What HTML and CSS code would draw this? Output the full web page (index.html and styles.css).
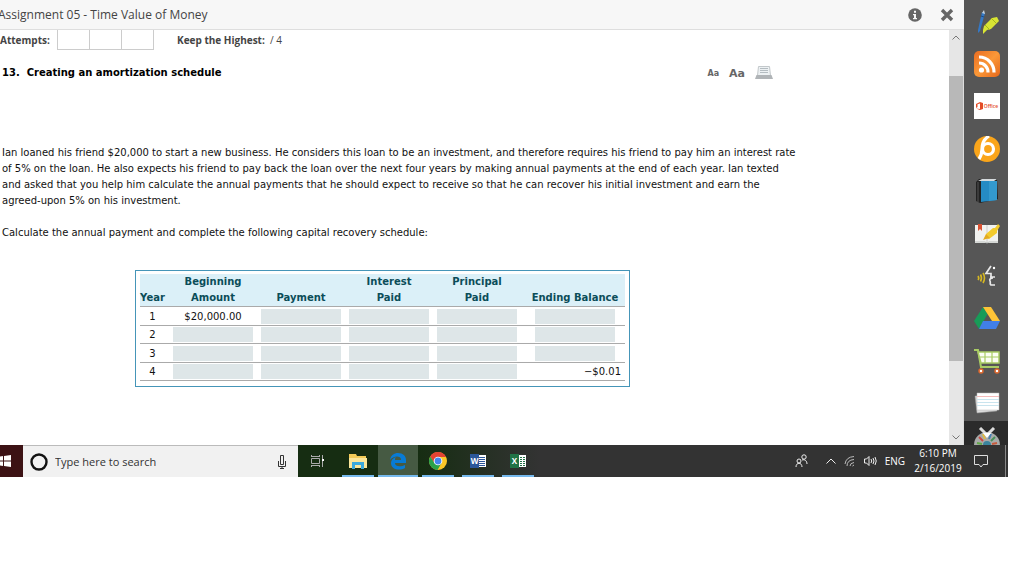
FILE: index.html
```html
<!DOCTYPE html>
<html lang="en">
<head>
  <meta charset="UTF-8">
  <meta name="viewport" content="width=device-width, initial-scale=1.0">
  <title>Assignment 05 - Time Value of Money</title>
  <link rel="stylesheet" href="styles.css">
</head>
<body>
  <div class="screen">
    <div class="workspace">
      <main class="assignment">
        <header class="title-bar">
          <h1>Assignment 05 - Time Value of Money</h1>
          <button class="icon-btn" aria-label="Information">
            <svg width="14" height="14" viewBox="0 0 14 14"><circle cx="7" cy="7" r="6.8" fill="#666"/><path d="M6 2.8h2v2H6zM5 6h3v4h1v1.2H5V10h1V7.2H5z" fill="#f7f7f7"/></svg>
          </button>
          <button class="icon-btn" aria-label="Close">
            <svg width="14" height="14" viewBox="0 0 14 14"><path d="M2 2l10 10M12 2L2 12" stroke="#666" stroke-width="3.4"/></svg>
          </button>
        </header>

        <div class="viewport">
          <div class="content">
            <div class="attempts">
              <span class="attempts-label">Attempts:</span>
              <div class="attempt-boxes"><span></span><span></span><span></span></div>
              <span><b>Keep the Highest:</b>&nbsp; / 4</span>
            </div>

            <div class="question-head">
              <h2>13.&nbsp; Creating an amortization schedule</h2>
              <div class="tools">
                <button class="font-small" aria-label="Smaller text">Aa</button>
                <button class="font-large" aria-label="Larger text">Aa</button>
                <button aria-label="Print">
                  <svg width="18" height="14" viewBox="0 0 18 14"><path d="M3.500.5h11l1 9h-13z" fill="#edf1f3" stroke="#c3c8cb"/><path d="M5 2.500h8M5 4.500h8M5 6.500h8" stroke="#b4bcc1"/><path d="M1.500 9h15l1.500 4H0z" fill="#b0b4b7"/></svg>
                </button>
              </div>
            </div>

            <p class="intro">Ian loaned his friend $20,000 to start a new business. He considers this loan to be an investment, and therefore requires his friend to pay him an interest rate<br>
            of 5% on the loan. He also expects his friend to pay back the loan over the next four years by making annual payments at the end of each year. Ian texted<br>
            and asked that you help him calculate the annual payments that he should expect to receive so that he can recover his initial investment and earn the<br>
            agreed-upon 5% on his investment.</p>
            <p>Calculate the annual payment and complete the following capital recovery schedule:</p>

            <div class="schedule">
              <table>
                <thead>
                  <tr>
                    <th class="year">Year</th>
                    <th>Beginning<br>Amount</th>
                    <th>Payment</th>
                    <th>Interest<br>Paid</th>
                    <th>Principal<br>Paid</th>
                    <th class="ending">Ending Balance</th>
                  </tr>
                </thead>
                <tbody>
                  <tr>
                    <td class="year">1</td>
                    <td>$20,000.00</td>
                    <td><input type="text" aria-label="Payment, year 1"></td>
                    <td><input type="text" aria-label="Interest paid, year 1"></td>
                    <td><input type="text" aria-label="Principal paid, year 1"></td>
                    <td class="ending"><input type="text" aria-label="Ending balance, year 1"></td>
                  </tr>
                  <tr>
                    <td class="year">2</td>
                    <td><input type="text" aria-label="Beginning amount, year 2"></td>
                    <td><input type="text" aria-label="Payment, year 2"></td>
                    <td><input type="text" aria-label="Interest paid, year 2"></td>
                    <td><input type="text" aria-label="Principal paid, year 2"></td>
                    <td class="ending"><input type="text" aria-label="Ending balance, year 2"></td>
                  </tr>
                  <tr>
                    <td class="year">3</td>
                    <td><input type="text" aria-label="Beginning amount, year 3"></td>
                    <td><input type="text" aria-label="Payment, year 3"></td>
                    <td><input type="text" aria-label="Interest paid, year 3"></td>
                    <td><input type="text" aria-label="Principal paid, year 3"></td>
                    <td class="ending"><input type="text" aria-label="Ending balance, year 3"></td>
                  </tr>
                  <tr>
                    <td class="year">4</td>
                    <td><input type="text" aria-label="Beginning amount, year 4"></td>
                    <td><input type="text" aria-label="Payment, year 4"></td>
                    <td><input type="text" aria-label="Interest paid, year 4"></td>
                    <td><input type="text" aria-label="Principal paid, year 4"></td>
                    <td class="rounding">−$0.01</td>
                  </tr>
                </tbody>
              </table>
            </div>
          </div>

          <div class="scrollbar">
            <button aria-label="Scroll up"><svg width="8" height="5" viewBox="0 0 8 5"><path d="M.5 4.500L4 1l3.500 3.500" fill="none" stroke="#777"/></svg></button>
            <div class="track"><div class="thumb"></div></div>
            <button aria-label="Scroll down"><svg width="8" height="5" viewBox="0 0 8 5"><path d="M.5.5L4 4 7.500.5" fill="none" stroke="#777"/></svg></button>
          </div>
        </div>
      </main>

      <nav class="app-rail">
        <button aria-label="Highlighter">
          <svg width="26" height="26" viewBox="0 0 26 26"><path d="M8 3l3 1-5 18-2 2 0-3z" fill="#3478c5"/><path d="M7 7l3 1" stroke="#1c4c86"/><path d="M10 1l1 4-3-1z" fill="#c9d3dc"/><path d="M10 17l8-8 5-1 2 4-8 8-4 1-4 4 0-4z" fill="#d9e534"/><path d="M11 16l5 5M17 9l5 5" stroke="#a6b51c"/></svg>
        </button>
        <button aria-label="RSS feed">
          <svg width="26" height="26" viewBox="0 0 26 26"><defs><linearGradient id="rss" x2="1" y2="1"><stop stop-color="#e96c22"/><stop offset=".5" stop-color="#fa9838"/><stop offset="1" stop-color="#e5671b"/></linearGradient></defs><rect width="26" height="26" rx="5" fill="url(#rss)"/><circle cx="7.500" cy="19" r="2.600" fill="#fff"/><path d="M5 12a9 9 0 0 1 9 9.500M5 6a15 15 0 0 1 15 15.500" fill="none" stroke="#fff" stroke-width="3.200"/></svg>
        </button>
        <button class="office" aria-label="Office">
          <svg width="7" height="8" viewBox="0 0 7 8"><path d="M0 2l4-2 3 1v6L4 8 0 6.500l4 .5V1.500l-2.500.8V5L0 6z" fill="#e34c26"/></svg>
          <span>Office</span>
        </button>
        <button aria-label="Bongo">
          <svg width="26" height="26" viewBox="0 0 26 26"><circle cx="13" cy="13" r="13" fill="#faa51a"/><path d="M15 0C10 3 8 8 8 13c0 4-1 7-3 10" fill="none" stroke="#fff" stroke-width="3.200"/><circle cx="14" cy="13" r="5.500" fill="none" stroke="#fff" stroke-width="3.200"/></svg>
        </button>
        <button aria-label="Dictionary">
          <svg width="24" height="26" viewBox="0 0 24 26"><path d="M1 4L4 1h18l1 20-18 4-4-2z" fill="#222"/><path d="M3 3l4-2h15l-3 2z" fill="#d5dadd"/><path d="M6 3h16v19L6 24z" fill="#258bc4"/><path d="M14 3h8v19l-8 1z" fill="#3399ce"/><path d="M3 4v20" stroke="#555"/></svg>
        </button>
        <button aria-label="Notebook">
          <svg width="26" height="22" viewBox="0 0 26 22"><path d="M1 2h23v18H1z" fill="#f1f2f0"/><path d="M1 19h10l2 1 2-1h9" fill="none" stroke="#b9bdba"/><path d="M13 2v17" stroke="#ccc"/><path d="M4 1h4v7L6 6 4 8z" fill="#d95132"/><path d="M12 11L19 5l2 0 3-4 2 2-3 5 0 2-8 6-3-1z" fill="#f3cb2d"/><path d="M12 11l4 4-4 1-3 1z" fill="#e2aa20"/></svg>
        </button>
        <button aria-label="Read aloud">
          <svg width="20" height="24" viewBox="0 0 20 24"><path d="M14 2L9 9.500h5v3M13 13h5M18 21h-3c-3 0-1-3-2-4-1-2 1-3 3-3" fill="none" stroke="#e8e8e8" stroke-width="1.700"/><circle cx="17" cy="4" r="1.200" fill="#fff"/><path d="M6 9q3 5 0 10M3.500 10.500q2 3.500 0 7M1 12q1.500 2.500 0 4" fill="none" stroke="#d6b722" stroke-width="1.600"/></svg>
        </button>
        <button aria-label="Google Drive">
          <svg width="26" height="22" viewBox="0 0 26 22"><path d="M9 0l4.500 7L5 22 0 14z" fill="#189b58"/><path d="M9 0h8l9 14h-8z" fill="#fec437"/><path d="M9 14h17l-4 8H5z" fill="#417fe8"/></svg>
        </button>
        <button aria-label="Shopping cart">
          <svg width="28" height="26" viewBox="0 0 28 26"><path d="M1 2h4l3 17h18" fill="none" stroke="#a9cc64" stroke-width="2"/><path d="M5 4h21v11H8z" fill="#fbfdf3" stroke="#a9cc64" stroke-width="1.500"/><path d="M6 9h20M12 4v11M19 4v11" stroke="#a9cc64" stroke-width="1.200"/><circle cx="8" cy="23" r="2" fill="#fff" stroke="#dc672d" stroke-width="1.500"/><circle cx="24" cy="23" r="2" fill="#fff" stroke="#dc672d" stroke-width="1.500"/></svg>
        </button>
        <button aria-label="Flashcards">
          <svg width="26" height="22" viewBox="0 0 26 22"><path d="M1 4l22-2v17L3 21z" fill="#ddd" stroke="#999" stroke-width=".5"/><path d="M3 1h22v17H3z" fill="#fff" stroke="#bbb" stroke-width=".5"/><path d="M3 4.500h22" stroke="#f3bcbc"/><path d="M3 7.500h22M3 10.500h22M3 13.500h22" stroke="#c9e4ee"/></svg>
        </button>
        <button class="rail-more" aria-label="More apps">
          <svg width="28" height="18" viewBox="0 0 28 18"><path d="M1 18a13 13 0 0 1 26 0z" fill="#a8aaa9"/><path d="M4 16l5 1" stroke="#61a848" stroke-width="2"/><path d="M6 10l4 4" stroke="#c84842" stroke-width="2"/><path d="M10 7l2 5" stroke="#e0bb42" stroke-width="2"/><path d="M18 7l-2 5" stroke="#487fb0" stroke-width="2"/><path d="M22 10l-4 4" stroke="#48915a" stroke-width="2"/><path d="M24 16l-5 1" stroke="#c65a3c" stroke-width="2"/><path d="M10 18a4 4 0 0 1 8 0z" fill="#3b849d"/><path d="M7 1l7 7 7-7" fill="none" stroke="#ddd" stroke-width="3"/><path d="M10 6h8l-4 5z" fill="#fff"/></svg>
        </button>
      </nav>
    </div>

    <footer class="taskbar">
      <button class="start" aria-label="Start">
        <svg width="11" height="12" viewBox="0 0 11 12"><path d="M0 1.500l3-.5v4.500H0zM4 1l7-1v5.500H4zM0 6.500h3V11l-3-.5zM4 6.500h7V12l-7-1z" fill="#fff"/></svg>
      </button>
      <div class="search">
        <svg width="18" height="18" viewBox="0 0 18 18"><circle cx="9" cy="9" r="7.500" fill="none" stroke="#111" stroke-width="2.400"/></svg>
        <input type="text" placeholder="Type here to search" aria-label="Search">
        <button aria-label="Voice search">
          <svg width="10" height="14" viewBox="0 0 10 14"><path d="M3.500.5h3v9h-3zM1.500 6v5.500h7V6M5 11v2M3 13.500h4" fill="none" stroke="#333"/></svg>
        </button>
      </div>
      <div class="apps">
        <button aria-label="Task view">
          <svg width="14" height="12" viewBox="0 0 14 12"><path d="M.5 0v2M8.500 0v2M.5 10v2M8.500 10v2M0 1.500h9M0 10.500h9M.5 3.500h8v5h-8zM11.500 0v12" fill="none" stroke="#aaa"/><path d="M11 4h2v2h-2z" fill="#fff"/></svg>
        </button>
        <button class="open" aria-label="File Explorer">
          <svg width="18" height="15" viewBox="0 0 18 15"><path d="M0 0h7l1 2h9v12H0z" fill="#f2cb58"/><path d="M0 4h18v10H0z" fill="#fbe69a"/><path d="M3 15V8h12v7h-3v-4H6v4z" fill="#3ba9dc"/></svg>
        </button>
        <button class="open active" aria-label="Edge">
          <svg width="18" height="18" viewBox="0 0 18 18"><path d="M1 8C2 3 5 1 9 1c5 0 8 3 8 7v3H6c0 4 6 4 10 2v3c-5 3-14 2-14-5 0-3 2-5 5-6-1 1-1 2-1 3h6c0-5-8-4-11 0z" fill="#087bd5"/></svg>
        </button>
        <button class="open" aria-label="Chrome">
          <svg width="18" height="18" viewBox="0 0 18 18"><circle cx="9" cy="9" r="9" fill="#fbc728"/><path d="M1.200 4.500A9 9 0 0 1 16.800 4.500L17 5H9L5 11z" fill="#e34334"/><path d="M1.200 4.500A9 9 0 0 0 8.500 18l4-7H5.500z" fill="#2ba14b"/><circle cx="9" cy="9" r="4.300" fill="#fff"/><circle cx="9" cy="9" r="3.400" fill="#4485ed"/></svg>
        </button>
        <button class="open office-app word" aria-label="Word">
          <span>W</span><svg width="7" height="12" viewBox="0 0 7 12"><path d="M0 0h7v12H0z" fill="#fff"/><path d="M0 2.500h6M0 4.500h6M0 6.500h6M0 8.500h6M0 10.500h6" stroke="#2b579a"/></svg>
        </button>
        <button class="open office-app excel" aria-label="Excel">
          <span>X</span><svg width="7" height="12" viewBox="0 0 7 12"><path d="M0 0h7v12H0z" fill="#fff"/><path d="M1 2.500h2M4 2.500h2M1 4.500h2M4 4.500h2M1 6.500h2M4 6.500h2M1 8.500h2M4 8.500h2M1 10.500h2M4 10.500h2" stroke="#217346"/></svg>
        </button>
      </div>
      <div class="tray">
        <button class="people" aria-label="People">
          <svg width="13" height="14" viewBox="0 0 13 14"><g fill="none" stroke="#eee"><circle cx="4" cy="7" r="2"/><path d="M1 13c0-5 6-5 6 0"/><circle cx="9" cy="3" r="2.200"/><path d="M7 6c3-1 5 1 5 4"/></g></svg>
        </button>
        <button aria-label="Show hidden icons">
          <svg width="10" height="6" viewBox="0 0 10 6"><path d="M.5 5.500L5 1l4.500 4.500" fill="none" stroke="#eee"/></svg>
        </button>
        <button aria-label="Network">
          <svg width="12" height="12" viewBox="0 0 12 12"><g fill="none" stroke="#bbb"><path d="M1 9Q2 2 10 1.500"/><path d="M3 11Q3 5 10 4.500M6 11Q6 8 10 7.500M8.500 11l1.500-1"/></g></svg>
        </button>
        <button aria-label="Volume">
          <svg width="13" height="12" viewBox="0 0 13 12"><path d="M.5 4h2L5 1.500v9L2.500 8h-2zM7 4q1.500 2 0 4M9 3q2 3 0 6M11 2q2.500 4 0 8" fill="none" stroke="#eee"/></svg>
        </button>
        <button class="lang">ENG</button>
        <button class="clock">6:10 PM<br>2/16/2019</button>
        <button class="notes" aria-label="Notifications">
          <svg width="14" height="13" viewBox="0 0 14 13"><path d="M.5.5h13v9H9l-2 2.500L5 9.500H.5z" fill="none" stroke="#ddd"/></svg>
        </button>
      </div>
    </footer>
  </div>
</body>
</html>
```

FILE: styles.css
```css
* {
  box-sizing: border-box;
}

body {
  margin: 0;
  background-color: #fff;
  color: #111;
  font-family: Verdana, "DejaVu Sans", sans-serif;
  font-size: 10px;
  line-height: 16px;
}

button {
  display: flex;
  align-items: center;
  justify-content: center;
  padding: 0;
  border: none;
  background: none;
  font-family: inherit;
  cursor: pointer;
}

svg {
  display: block;
  flex: none;
}

.screen {
  margin-right: 16px;
}

.workspace {
  display: flex;
}

.assignment {
  flex: 1;
  min-width: 0;
  display: flex;
  flex-direction: column;
}

/* title bar */
.title-bar {
  display: flex;
  align-items: center;
  gap: 18px;
  height: 30px;
  padding-right: 10px;
  background-color: #f7f7f7;
  border-bottom: 1px solid #dedede;
}

.title-bar h1 {
  flex: 1;
  margin: 0 0 0 -2px;
  color: #444;
  font-family: "Open Sans", sans-serif;
  font-size: 12px;
  font-weight: 400;
}

.viewport {
  flex: 1;
  display: flex;
}

.content {
  flex: 1;
  min-width: 0;
  padding-left: 2px;
}

/* attempts */
.attempts {
  display: flex;
  align-items: center;
  height: 20px;
  color: #444;
  font-family: "Open Sans", sans-serif;
}

.attempts-label {
  width: 53px;
  margin-left: -2px;
  font-weight: 700;
}

.attempt-boxes {
  display: flex;
  align-self: stretch;
  width: 97px;
  margin: 0 23px 0 4px;
  border: 1px solid #ccc;
  border-top: none;
}

.attempt-boxes span {
  flex: 1;
}

.attempt-boxes span + span {
  border-left: 1px solid #ccc;
}

/* question */
.question-head {
  display: flex;
  justify-content: space-between;
  max-width: 771px;
  margin: 15px 0 64px;
}

.question-head h2 {
  margin: 0;
  color: #000;
  font-size: 10px;
}

.tools {
  display: flex;
  align-items: center;
  gap: 10px;
}

.font-small,
.font-large {
  color: #666;
  font-family: "DejaVu Sans", sans-serif;
  font-weight: 700;
}

.font-small {
  font-size: 8px;
}

.font-large {
  font-size: 11px;
}

.content p {
  margin: 0 0 16px;
}

.intro {
  white-space: nowrap;
}

/* amortization table */
.schedule {
  width: 495px;
  margin: 29px 0 0 133px;
  padding: 3px 4px 5px;
  border: 1px solid #4595b8;
}

.schedule table {
  width: 100%;
  border-collapse: separate;
  border-spacing: 0;
  table-layout: fixed;
  text-align: center;
}

.schedule th {
  width: 88px;
  padding: 0;
  background-color: #dbf0f8;
  border-bottom: 1px solid #aaa;
  color: #0b4d59;
  vertical-align: bottom;
}

.schedule td {
  height: 18px;
  padding: 0;
  border-bottom: 1px solid #aaa;
  line-height: 15px;
}

.schedule tbody tr:nth-child(odd) td {
  height: 19px;
}

.schedule .year {
  width: 29px;
  padding-right: 4px;
}

.schedule .ending {
  width: 104px;
  padding-left: 4px;
}

.schedule .rounding {
  padding-right: 4px;
  text-align: right;
}

.schedule input {
  display: block;
  width: 80px;
  height: 15px;
  margin: 0 auto;
  padding: 0 4px;
  border: none;
  background-color: #dee6e8;
  font: inherit;
}

/* scrollbar */
.scrollbar {
  display: flex;
  flex-direction: column;
  width: 15px;
  background-color: #e6e6e6;
  border-right: 1px solid #ddd;
}

.scrollbar button {
  height: 15px;
}

.track {
  flex: 1;
  display: flex;
  flex-direction: column;
  padding: 31px 0 69px;
}

.thumb {
  flex: 1;
  background-color: #b8b8b8;
}

/* app rail */
.app-rail {
  display: flex;
  flex-direction: column;
  width: 44px;
  padding-top: 1px;
  background-color: #565656;
}

.app-rail button {
  width: 100%;
  height: 42px;
  padding-left: 2px;
}

.app-rail button:nth-child(3n) {
  height: 43px;
}

.app-rail .office:nth-child(3n) {
  gap: 1px;
  width: 26px;
  height: 26px;
  margin: 8px 8px 9px 10px;
  padding: 0;
  background-color: #fff;
  color: #e34c26;
  font-family: "Open Sans", sans-serif;
  font-size: 5px;
  font-weight: 600;
}

.app-rail .rail-more {
  align-items: flex-end;
  height: 24px;
  margin-top: -3px;
  background-color: #2b2b2b;
}

/* taskbar */
.taskbar {
  display: flex;
  height: 32px;
  background: linear-gradient(90deg, #162d12 0, #162d12 418px, #333 540px);
  color: #fff;
  font-family: "Open Sans", sans-serif;
}

.start {
  justify-content: flex-start;
  width: 23px;
  background-color: #3c1214;
}

.search {
  display: flex;
  align-items: center;
  width: 275px;
  padding: 0 11px 0 7px;
  border-top: 1px solid #bbb;
  background-color: #f1f1f1;
}

.search input {
  flex: 1;
  min-width: 0;
  padding: 0 7px;
  border: none;
  background: none;
  font-family: inherit;
  font-size: 11px;
}

.search input::placeholder {
  color: #333;
}

.apps {
  display: flex;
}

.apps button {
  width: 40px;
  padding-top: 2px;
  border-bottom: 2px solid transparent;
}

.apps .open {
  width: 32px;
  margin: 0 4px;
  border-bottom-color: #76b9ed;
}

.apps .active {
  width: 40px;
  margin: 0;
  background-color: #465a43;
}

.office-app span {
  width: 9px;
  color: #fff;
  font-size: 8px;
  font-weight: 700;
  line-height: 14px;
}

.word span {
  background-color: #2b579a;
}

.excel span {
  background-color: #217346;
}

.tray {
  display: flex;
  gap: 8px;
  margin-left: auto;
  padding-right: 2px;
}

.tray button {
  color: #fff;
}

.tray .people {
  margin-right: 10px;
}

.tray .lang,
.tray .clock {
  font-size: 10px;
  line-height: 15px;
}

.tray .clock {
  width: 50px;
}

.tray .notes {
  width: 35px;
  padding-right: 14px;
  border-right: 1px solid #888;
}
```
